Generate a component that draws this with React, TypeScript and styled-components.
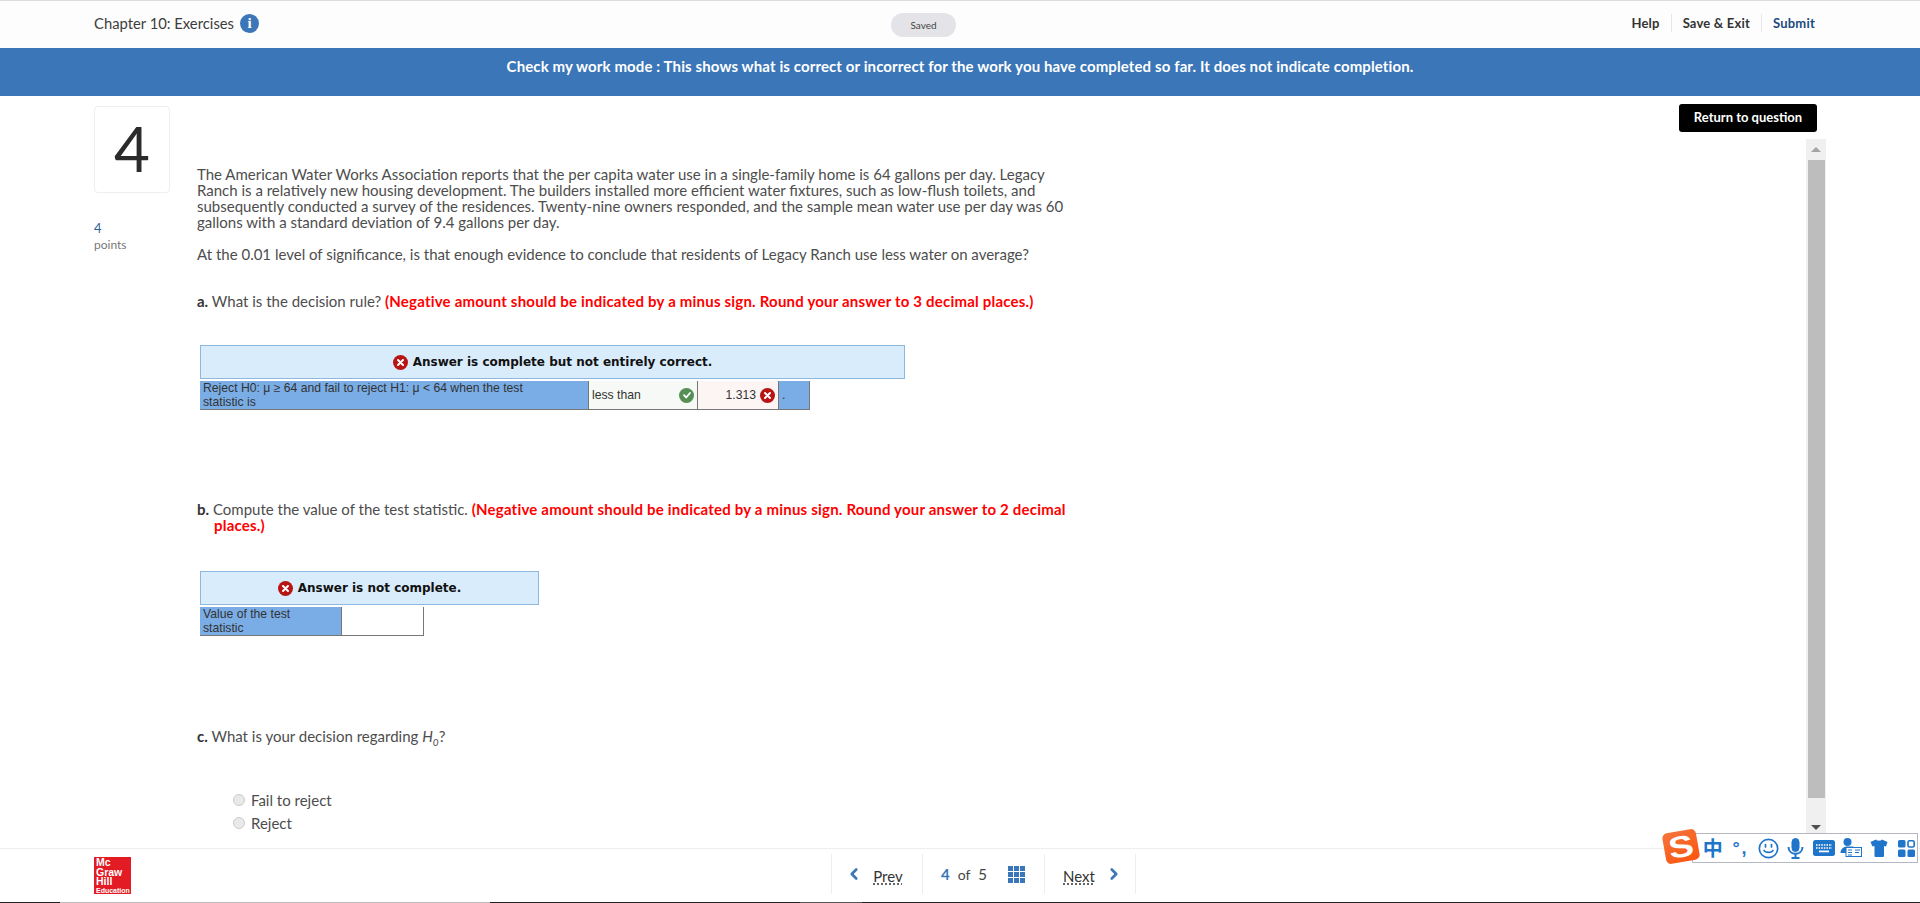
import { createGlobalStyle, styled } from "styled-components";
import { ChevronLeft, ChevronRight } from "lucide-react";

const GlobalStyle = createGlobalStyle`
  html, body {
    margin: 0;
    padding: 0;
    height: 903px;
    overflow: hidden;
    background: #fff;
    font-family: Lato, "Open Sans", sans-serif;
    color: #444;
  }
`;

const Page = styled.div`
  position: relative;
  display: flex;
  flex-direction: column;
  width: 1920px;
  height: 903px;
  overflow: hidden;
`;

const Header = styled.header`
  box-sizing: border-box;
  height: 48px;
  padding: 0 105px 0 94px;
  display: grid;
  grid-template-columns: 797px auto 1fr;
  align-items: center;
  background: #fdfdfd;
  border-top: 1px solid #dcdce0;
`;

const TitleGroup = styled.div`
  display: flex;
  align-items: center;
  gap: 6px;
  font-size: 14.8px;
  color: #3c3c3c;
  padding-bottom: 3px;
`;

const InfoDot = styled.span`
  width: 19px;
  height: 19px;
  border-radius: 50%;
  background: #3a76b8;
  color: #fff;
  display: flex;
  align-items: center;
  justify-content: center;
  font: bold 15px "Liberation Serif", serif;
`;

const SavedPill = styled.div`
  width: 65px;
  height: 24px;
  border-radius: 12px;
  background: #e4e3e7;
  display: flex;
  align-items: center;
  justify-content: center;
  font-size: 10px;
  color: #444;
`;

const HeaderLinks = styled.nav`
  justify-self: end;
  display: flex;
  align-items: center;
  padding-bottom: 4px;
`;

const HeaderLink = styled.a<{ $primary?: boolean }>`
  font-size: 13px;
  letter-spacing: 0.2px;
  font-weight: 700;
  line-height: 18px;
  padding: 0 11px;
  color: ${({ $primary }) => ($primary ? "#1c4a80" : "#333")};
  border-left: 1px solid #e6e6e6;
  &:first-child {
    border-left: 0;
  }
  &:last-child {
    padding-right: 0;
  }
`;

const ModeBanner = styled.div`
  height: 48px;
  background: #3a76b8;
  color: #fff;
  font-size: 15px;
  letter-spacing: 0.11px;
  font-weight: 700;
  display: flex;
  align-items: center;
  justify-content: center;
  padding-bottom: 12px;
  box-sizing: border-box;
`;

const Main = styled.main`
  flex: 1;
  min-height: 0;
  display: flex;
  padding: 0 94px;
  overflow: hidden;
`;

const SideColumn = styled.aside`
  width: 76px;
  margin-right: 27px;
  padding-top: 10px;
  flex: none;
`;

const NumberBox = styled.div`
  box-sizing: border-box;
  height: 87px;
  border: 1px solid #eee;
  border-radius: 4px;
  display: flex;
  align-items: center;
  justify-content: center;
  font-size: 62px;
  color: #2b2b2b;
  padding-bottom: 3px;
  margin-bottom: 26px;
`;

const PointsValue = styled.div`
  font-size: 13px;
  line-height: 18px;
  color: #2d6199;
`;

const PointsLabel = styled.div`
  font-size: 12px;
  line-height: 16px;
  color: #777;
`;

const Question = styled.section`
  width: 880px;
  padding-top: 70px;
  font-size: 15px;
  line-height: 16px;
  color: #4d4d4d;
  flex: none;
`;

const Para = styled.p`
  margin: 0 0 16px;
`;

const PartLine = styled.p<{ $top: number }>`
  margin: ${({ $top }) => $top}px 0 0;
  padding-left: 17px;
  text-indent: -17px;
`;

const PartMark = styled.b`
  color: #333;
`;

const Warn = styled.b`
  color: #f00;
  letter-spacing: 0.2px;
`;

const Sub = styled.sub`
  font-size: 10px;
  line-height: 0;
`;

const AnswerBanner = styled.div<{ $w: number; $top: number }>`
  box-sizing: border-box;
  width: ${({ $w }) => $w}px;
  height: 34px;
  margin: ${({ $top }) => $top}px 0 2px 3px;
  background: #d9ecfb;
  border: 1px solid #8db8e0;
  display: flex;
  align-items: center;
  justify-content: center;
  gap: 5px;
  font: bold 12px "DejaVu Sans", sans-serif;
  color: #111;
`;

const StatusDot = styled.span<{ $ok?: boolean }>`
  width: 15px;
  height: 15px;
  border-radius: 50%;
  flex: none;
  background: ${({ $ok }) => ($ok ? "#568f55" : "#b81414")};
  display: flex;
  align-items: center;
  justify-content: center;
`;

const AnswerRow = styled.div<{ $h: number }>`
  display: flex;
  margin-left: 3px;
  height: ${({ $h }) => $h}px;
  width: fit-content;
  box-sizing: border-box;
  border-bottom: 1px solid #777;
`;

const Cell = styled.div<{ $w: number; $bg: string; $end?: boolean }>`
  box-sizing: border-box;
  width: ${({ $w }) => $w}px;
  background: ${({ $bg }) => $bg};
  border-right: 1px solid #777;
  padding: 0 3px;
  display: flex;
  align-items: center;
  justify-content: ${({ $end }) => ($end ? "flex-end" : "space-between")};
  gap: 4px;
  font: 12.2px/14px "Liberation Sans", Arial, sans-serif;
  color: #333;
`;

const Radios = styled.div`
  margin: 44px 0 0 36px;
`;

const RadioRow = styled.label`
  display: flex;
  align-items: center;
  gap: 6px;
  height: 23px;
`;

const Radio = styled.input`
  appearance: none;
  margin: 0;
  width: 12px;
  height: 12px;
  border-radius: 50%;
  border: 1px solid #ccc;
  background: #e9e9e9;
  box-sizing: border-box;
`;

const RightColumn = styled.div`
  margin-left: auto;
  width: 147px;
  flex: none;
  display: flex;
  flex-direction: column;
  align-items: flex-start;
  padding: 8px 0 10px;
  box-sizing: border-box;
`;

const ReturnButton = styled.button`
  width: 138px;
  height: 28px;
  border: 0;
  border-radius: 3px;
  background: #000;
  color: #fff;
  font: 700 13px Lato, sans-serif;
  padding: 0 0 3px;
`;

const Scrollbar = styled.div`
  flex: 1;
  align-self: flex-end;
  margin-top: 7px;
  width: 20px;
  background: #f0f0f0;
  display: flex;
  flex-direction: column;
  align-items: center;
`;

const ScrollArrow = styled.div<{ $down?: boolean }>`
  height: 21px;
  flex: none;
  display: flex;
  align-items: center;
  justify-content: center;
  &::before {
    content: "";
    border-left: 5px solid transparent;
    border-right: 5px solid transparent;
    ${({ $down }) =>
      $down ? "border-top: 5px solid #505050;" : "border-bottom: 5px solid #a3a3a3;"}
  }
`;

const ScrollThumb = styled.div`
  width: 17px;
  height: 638px;
  background: #bdbdbd;
`;

const ScrollGap = styled.div`
  flex: 1;
`;

const Footer = styled.footer`
  box-sizing: border-box;
  height: 54px;
  border-top: 1px solid #eee;
  display: flex;
  align-items: center;
  position: relative;
  padding-left: 94px;
`;

const Logo = styled.div`
  box-sizing: border-box;
  width: 37px;
  height: 37px;
  background: #e21b25;
  color: #fff;
  padding: 1px 2px 0;
  font: 700 10.5px/9.5px "Liberation Sans", sans-serif;
  flex: none;
`;

const LogoSmall = styled.div`
  font-size: 7px;
  line-height: 7px;
`;

const Pager = styled.nav`
  position: absolute;
  left: 831px;
  top: 5px;
  height: 40px;
  display: flex;
  align-items: stretch;
`;

const PagerCell = styled.div<{ $w: number }>`
  box-sizing: border-box;
  width: ${({ $w }) => $w}px;
  border-left: 1px solid #eee;
  display: flex;
  align-items: center;
  justify-content: center;
  font-size: 14px;
  color: #444;
  &:last-child {
    border-right: 1px solid #eee;
  }
`;

const PagerLink = styled.a<{ $next?: boolean }>`
  font-size: 15px;
  padding-top: 3px;
  text-decoration: underline dotted;
  text-underline-offset: 2px;
  color: #333;
  margin: ${({ $next }) => ($next ? "0 10px 0 6px" : "0 6px 0 10px")};
`;

const Current = styled.b`
  color: #3a76b8;
  font-size: 15px;
`;

const OfLabel = styled.span`
  margin: 0 8px;
`;

const Total = styled.span`
  font-size: 15px;
  margin-right: 21px;
`;

const BottomEdge = styled.div`
  height: 1px;
  flex: none;
  background: linear-gradient(
    to right,
    #222 60px,
    #bbb 60px 490px,
    #222 490px 800px,
    #555 800px 862px,
    #222 862px
  );
`;

const ImeBar = styled.div`
  position: absolute;
  left: 1692px;
  top: 833px;
  box-sizing: border-box;
  width: 226px;
  height: 30px;
  background: #fff;
  border: 1px solid #b5b8c0;
  display: grid;
  grid-template-columns: repeat(8, 27.7px);
  padding-left: 6px;
  align-items: center;
  justify-items: center;
`;

const ImeLogo = styled.div`
  position: absolute;
  left: -29px;
  top: -3px;
  width: 34px;
  height: 31px;
  border-radius: 5px;
  transform: rotate(-10deg);
  background: linear-gradient(160deg, #f5743a, #fa5510);
  color: #fff;
  display: flex;
  align-items: center;
  justify-content: center;
`;

const ImeLogoLetter = styled.span`
  font: 900 30px/30px "Liberation Sans", sans-serif;
  transform: scaleX(1.25);
`;

const ImeGlyph = styled.span`
  color: #1f75c9;
  font: 700 20px/28px "Noto Sans CJK SC", sans-serif;
`;

const ImePunct = styled.span`
  color: #1f75c9;
  font: 700 18px/24px "Liberation Sans", sans-serif;
  letter-spacing: 2px;
`;

const Cross = () => (
  <svg width="9" height="9" viewBox="0 0 9 9">
    <path d="M2 2l5 5M7 2l-5 5" stroke="#fff" strokeWidth="2" strokeLinecap="round" />
  </svg>
);

const Check = () => (
  <svg width="10" height="10" viewBox="0 0 10 10">
    <path d="M2 5.2l2.2 2.2L8 3" stroke="#fff" strokeWidth="1.8" fill="none" strokeLinecap="round" />
  </svg>
);

const GridIcon = () => (
  <svg width="18" height="17" viewBox="0 0 18 17" fill="#3a76b8">
    {[0, 6, 12].map((x) =>
      [0, 6, 12].map((y) => <rect key={`${x}-${y}`} x={x} y={y} width="5" height="5" />)
    )}
  </svg>
);

const Smile = () => (
  <svg width="21" height="21" viewBox="0 0 21 21" fill="none" stroke="#1f75c9" strokeWidth="1.7">
    <circle cx="10.5" cy="10.5" r="9.2" />
    <path d="M6 12.5c1.2 2.6 7.8 2.6 9 0" strokeLinecap="round" />
    <path d="M7.5 6.5v2.5M13.5 6.5v2.5" strokeLinecap="round" />
  </svg>
);

const Mic = () => (
  <svg width="17" height="21" viewBox="0 0 17 21" fill="none" stroke="#1f75c9">
    <rect x="5" y="0.5" width="7" height="13" rx="3.5" fill="#1f75c9" />
    <path d="M1.5 9c0 9 14 9 14 0" strokeWidth="2" />
    <path d="M8.5 15.5v3.5M4.5 20h8" strokeWidth="2" />
  </svg>
);

const Keyboard = () => (
  <svg width="22" height="16" viewBox="0 0 22 16">
    <rect width="22" height="16" rx="2.5" fill="#1f75c9" />
    <path d="M3 5h16M3 8h16" stroke="#fff" strokeWidth="1.6" strokeDasharray="1.6 1" />
    <rect x="6" y="10.5" width="10" height="1.8" fill="#fff" />
  </svg>
);

const PersonBook = () => (
  <svg width="22" height="20" viewBox="0 0 22 20">
    <circle cx="7.5" cy="4" r="4" fill="#1f75c9" />
    <path d="M0.5 15c0-4 3-6.5 7-6.5h6V15z" fill="#1f75c9" />
    <rect x="6" y="9.5" width="15.5" height="9" fill="#fff" stroke="#1f75c9" />
    <path d="M8 12h4M8 14.5h4M8 17h4M15 12h5M15 14.5h4" stroke="#1f75c9" />
  </svg>
);

const Shirt = () => (
  <svg width="18" height="18" viewBox="0 0 18 18">
    <path
      d="M6 0.5c1 1.600 5 1.600 6 0l5.500 2.500-1.500 4.500-2-.6V17a1 1 0 0 1-1 1H5.500a1 1 0 0 1-1-1V6.900l-2 .6L.5 3z"
      fill="#1f75c9"
    />
  </svg>
);

const Tiles = () => (
  <svg width="17" height="17" viewBox="0 0 17 17">
    <rect x="0" y="0" width="7.500" height="7.500" rx="1.500" fill="#1f75c9" />
    <rect x="10" y="0.800" width="6.200" height="6.200" rx="1.500" fill="none" stroke="#1f75c9" strokeWidth="1.600" />
    <rect x="0" y="9.500" width="7.500" height="7.500" rx="1.500" fill="#1f75c9" />
    <rect x="9.500" y="9.500" width="7.500" height="7.500" rx="1.500" fill="#1f75c9" />
  </svg>
);

export default function App() {
  return (
    <Page>
      <GlobalStyle />
      <Header>
        <TitleGroup>
          Chapter 10: Exercises
          <InfoDot>i</InfoDot>
        </TitleGroup>
        <SavedPill>Saved</SavedPill>
        <HeaderLinks>
          <HeaderLink>Help</HeaderLink>
          <HeaderLink>Save &amp; Exit</HeaderLink>
          <HeaderLink $primary>Submit</HeaderLink>
        </HeaderLinks>
      </Header>
      <ModeBanner>
        Check my work mode : This shows what is correct or incorrect for the work you have completed so far. It does not indicate completion.
      </ModeBanner>
      <Main>
        <SideColumn>
          <NumberBox>4</NumberBox>
          <PointsValue>4</PointsValue>
          <PointsLabel>points</PointsLabel>
        </SideColumn>
        <Question>
          <Para>
            The American Water Works Association reports that the per capita water use in a single-family home is 64 gallons per day. Legacy
            <br />
            Ranch is a relatively new housing development. The builders installed more efficient water fixtures, such as low-flush toilets, and
            <br />
            subsequently conducted a survey of the residences. Twenty-nine owners responded, and the sample mean water use per day was 60
            <br />
            gallons with a standard deviation of 9.4 gallons per day.
          </Para>
          <Para>At the 0.01 level of significance, is that enough evidence to conclude that residents of Legacy Ranch use less water on average?</Para>
          <PartLine $top={31}>
            <PartMark>a.</PartMark> What is the decision rule?{" "}
            <Warn>(Negative amount should be indicated by a minus sign. Round your answer to 3 decimal places.)</Warn>
          </PartLine>
          <AnswerBanner $w={705} $top={36}>
            <StatusDot><Cross /></StatusDot>
            Answer is complete but not entirely correct.
          </AnswerBanner>
          <AnswerRow $h={29}>
            <Cell $w={389} $bg="#7aade6">
              <span>
                Reject H0: μ ≥ 64 and fail to reject H1: μ &lt; 64 when the test
                <br />
                statistic is
              </span>
            </Cell>
            <Cell $w={109} $bg="#f6f9f5">
              less than
              <StatusDot $ok><Check /></StatusDot>
            </Cell>
            <Cell $w={81} $bg="#fdf5f3" $end>
              1.313
              <StatusDot><Cross /></StatusDot>
            </Cell>
            <Cell $w={31} $bg="#7aade6">.</Cell>
          </AnswerRow>
          <PartLine $top={91}>
            <PartMark>b.</PartMark> Compute the value of the test statistic.{" "}
            <Warn>
              (Negative amount should be indicated by a minus sign. Round your answer to 2 decimal places.)
            </Warn>
          </PartLine>
          <AnswerBanner $w={339} $top={38}>
            <StatusDot><Cross /></StatusDot>
            Answer is not complete.
          </AnswerBanner>
          <AnswerRow $h={29}>
            <Cell $w={142} $bg="#7aade6">
              <span>
                Value of the test
                <br />
                statistic
              </span>
            </Cell>
            <Cell $w={82} $bg="#fff" />
          </AnswerRow>
          <PartLine $top={92}>
            <PartMark>c.</PartMark> What is your decision regarding <i>H<Sub>0</Sub></i>?
          </PartLine>
          <Radios>
            <RadioRow><Radio type="radio" disabled />Fail to reject</RadioRow>
            <RadioRow><Radio type="radio" disabled />Reject</RadioRow>
          </Radios>
        </Question>
        <RightColumn>
          <ReturnButton>Return to question</ReturnButton>
          <Scrollbar>
            <ScrollArrow />
            <ScrollThumb />
            <ScrollGap />
            <ScrollArrow $down />
          </Scrollbar>
        </RightColumn>
      </Main>
      <Footer>
        <Logo>
          Mc
          <br />
          Graw
          <br />
          Hill
          <LogoSmall>Education</LogoSmall>
        </Logo>
        <Pager>
          <PagerCell $w={91}>
            <ChevronLeft size={18} strokeWidth={3.5} color="#3a76b8" />
            <PagerLink>Prev</PagerLink>
          </PagerCell>
          <PagerCell $w={122}>
            <Current>4</Current>
            <OfLabel>of</OfLabel>
            <Total>5</Total>
            <GridIcon />
          </PagerCell>
          <PagerCell $w={92}>
            <PagerLink $next>Next</PagerLink>
            <ChevronRight size={18} strokeWidth={3.5} color="#3a76b8" />
          </PagerCell>
        </Pager>
      </Footer>
      <BottomEdge />
      <ImeBar>
        <ImeLogo><ImeLogoLetter>S</ImeLogoLetter></ImeLogo>
        <ImeGlyph>中</ImeGlyph>
        <ImePunct>°,</ImePunct>
        <Smile />
        <Mic />
        <Keyboard />
        <PersonBook />
        <Shirt />
        <Tiles />
      </ImeBar>
    </Page>
  );
}
